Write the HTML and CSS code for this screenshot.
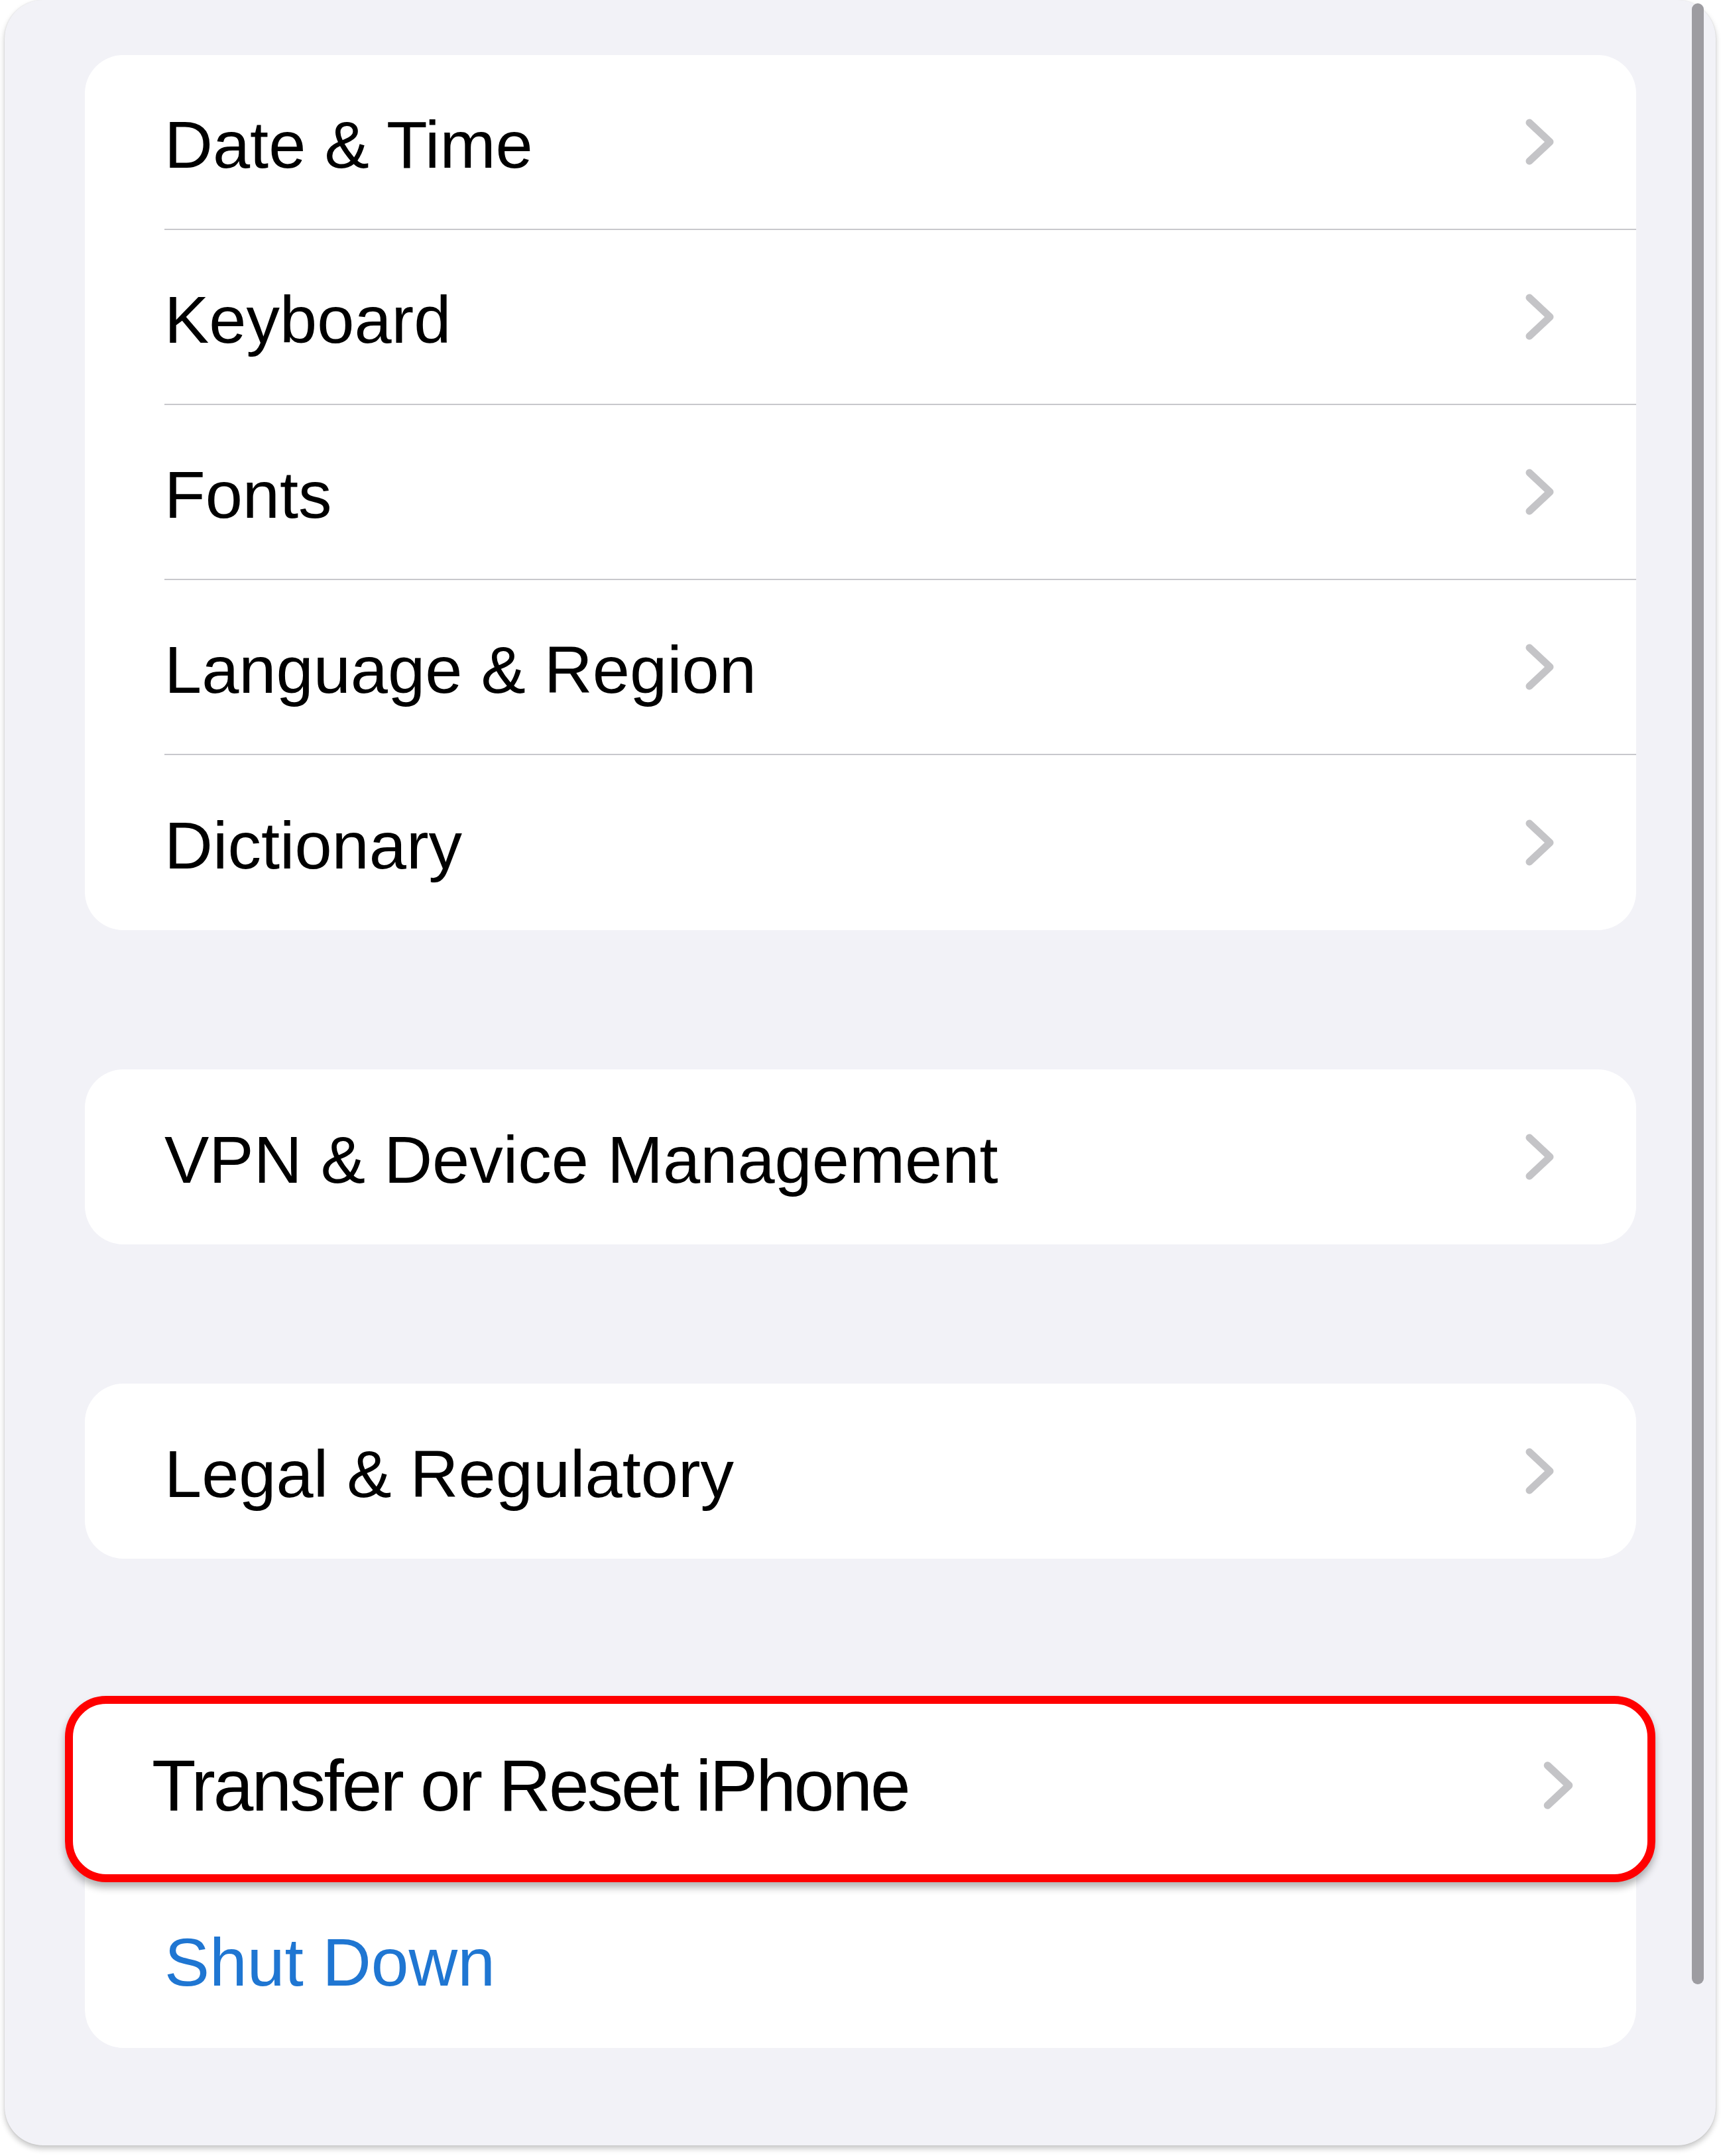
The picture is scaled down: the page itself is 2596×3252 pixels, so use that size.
FILE: index.html
```html
<!DOCTYPE html>
<html lang="en">
<head>
<meta charset="utf-8">
<title>General</title>
<link rel="stylesheet" href="styles.css">
</head>
<body>
<div class="frame">
  <div class="scrollbar"></div>

  <section class="group">
    <div class="row"><div class="row-inner"><span class="label">Date &amp; Time</span><svg class="chev" viewBox="0 0 52 80"><path d="M11 11 L42 40 L11 69"/></svg></div></div>
    <div class="row"><div class="row-inner"><span class="label">Keyboard</span><svg class="chev" viewBox="0 0 52 80"><path d="M11 11 L42 40 L11 69"/></svg></div></div>
    <div class="row"><div class="row-inner"><span class="label">Fonts</span><svg class="chev" viewBox="0 0 52 80"><path d="M11 11 L42 40 L11 69"/></svg></div></div>
    <div class="row"><div class="row-inner"><span class="label">Language &amp; Region</span><svg class="chev" viewBox="0 0 52 80"><path d="M11 11 L42 40 L11 69"/></svg></div></div>
    <div class="row"><div class="row-inner"><span class="label">Dictionary</span><svg class="chev" viewBox="0 0 52 80"><path d="M11 11 L42 40 L11 69"/></svg></div></div>
  </section>

  <section class="group">
    <div class="row"><div class="row-inner"><span class="label">VPN &amp; Device Management</span><svg class="chev" viewBox="0 0 52 80"><path d="M11 11 L42 40 L11 69"/></svg></div></div>
  </section>

  <section class="group">
    <div class="row"><div class="row-inner"><span class="label">Legal &amp; Regulatory</span><svg class="chev" viewBox="0 0 52 80"><path d="M11 11 L42 40 L11 69"/></svg></div></div>
  </section>

  <section class="group group-reset">
    <div class="highlight">
      <span class="label label-big">Transfer or Reset iPhone</span>
      <svg class="chev chev-big" viewBox="0 0 52 80"><path d="M11 11 L42 40 L11 69"/></svg>
    </div>
    <div class="row row-shut"><div class="row-inner"><span class="label link">Shut Down</span></div></div>
  </section>
</div>
</body>
</html>
```

FILE: styles.css
```css
html, body {
  margin: 0;
  padding: 0;
  background: #ffffff;
}

body {
  width: 2596px;
  height: 3252px;
  overflow: hidden;
  font-family: "Liberation Sans", Arial, sans-serif;
}

.frame {
  position: relative;
  box-sizing: border-box;
  margin-left: 7px;
  width: 2581px;
  height: 3236px;
  padding: 83px 120px 0 121px;
  background: #f2f2f7;
  border-radius: 58px;
  box-shadow: 0 5px 9px rgba(0, 0, 0, 0.22), 0 0 2px rgba(0, 0, 0, 0.12);
  display: flex;
  flex-direction: column;
  gap: 210px;
}

.scrollbar {
  position: absolute;
  left: 2545px;
  top: 5px;
  width: 18px;
  height: 2988px;
  border-radius: 9px;
  background: #9d9ca1;
  z-index: 2;
}

.group {
  background: #ffffff;
  border-radius: 58px;
}

.row {
  padding-left: 120px;
}

.row-inner {
  box-sizing: border-box;
  height: 264px;
  padding-right: 120px;
  display: flex;
  align-items: center;
  justify-content: space-between;
  border-bottom: 2px solid #c8c8cc;
}

.row:last-child .row-inner,
.row-shut .row-inner {
  border-bottom: none;
}

.label {
  font-size: 101px;
  color: #000000;
  padding-top: 8px;
  white-space: nowrap;
}

.link {
  font-size: 102px;
  color: #1f76d2;
  padding-top: 6px;
}

.chev {
  width: 52px;
  height: 80px;
  flex: none;
}

.chev path {
  fill: none;
  stroke: #c4c4c7;
  stroke-width: 11;
  stroke-linecap: round;
  stroke-linejoin: round;
}

.highlight {
  position: relative;
  z-index: 1;
  box-sizing: border-box;
  height: 281px;
  margin: -3px -29px -14px -30px;
  border: 12px solid #ff0000;
  border-radius: 62px;
  background: #ffffff;
  box-shadow: 0 8px 12px rgba(0, 0, 0, 0.3);
  padding: 0 108px 12px 119px;
  display: flex;
  align-items: center;
  justify-content: space-between;
}

.label-big {
  font-size: 109px;
  letter-spacing: -3px;
  padding-top: 0;
}

.chev-big {
  width: 54px;
  height: 84px;
}
```
